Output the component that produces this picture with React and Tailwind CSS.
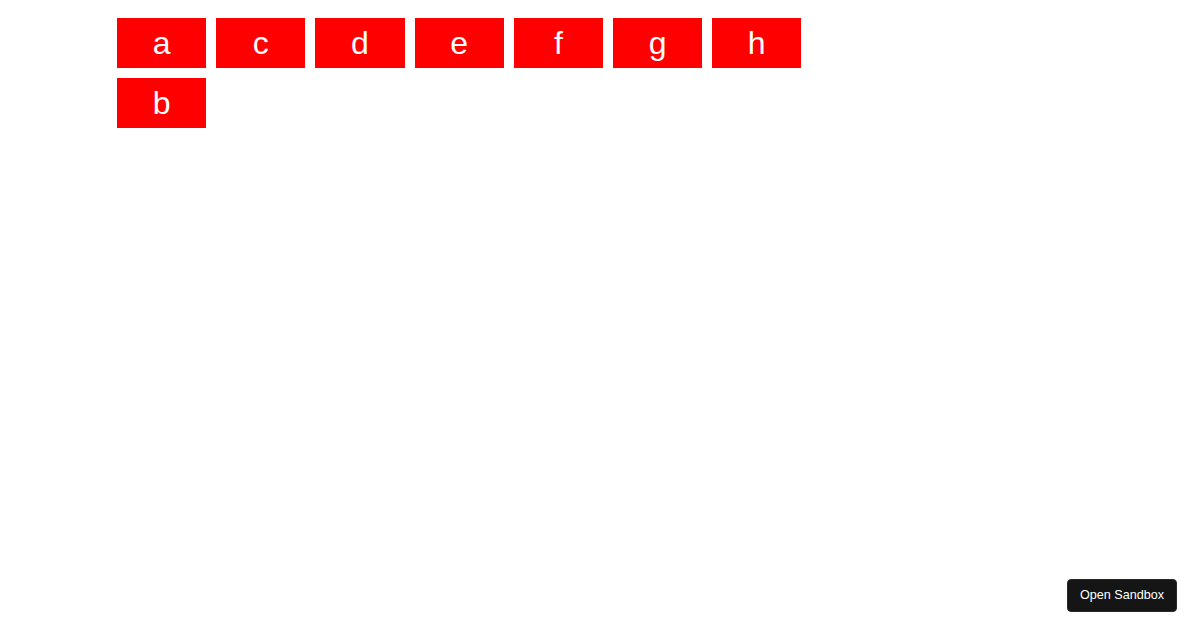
const ROWS = [['a', 'c', 'd', 'e', 'f', 'g', 'h'], ['b']]

function Box({ label }) {
  return (
    <div className="w-[89.2px] h-[50px] bg-[#ff0000] text-white flex items-center justify-center text-[32px] leading-none">
      {label}
    </div>
  )
}

export default function App() {
  return (
    <div className="min-h-screen bg-white font-['Liberation_Sans',Arial,sans-serif]">
      <div className="pt-[18px] pl-[117px] flex flex-col gap-[10px]">
        {ROWS.map((row, i) => (
          <div key={i} className="flex gap-[10px]">
            {row.map((l) => (
              <Box key={l} label={l} />
            ))}
          </div>
        ))}
      </div>

      <button className="fixed right-[23px] bottom-[18px] h-[33px] w-[110px] rounded-[4px] bg-[#151515] text-white text-[12.6px] border border-[#2a2a2a]">
        Open Sandbox
      </button>
    </div>
  )
}
